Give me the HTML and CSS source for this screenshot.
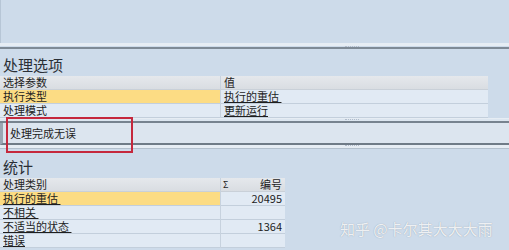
FILE: index.html
```html
<!DOCTYPE html>
<html lang="zh">
<head>
  <meta charset="UTF-8">
  <title>处理选项</title>
  <link rel="stylesheet" href="styles.css">
</head>
<body>
  <div class="screen">
    <!-- 顶部空白区域 -->
    <div class="top-pane"></div>
    <div class="splitter"><span class="grip"></span></div>

    <!-- 处理选项 -->
    <div class="section">
      <h2 class="title">处理选项</h2>
      <div class="grid grid-opts">
        <div class="row head">
          <div class="c1">选择参数</div>
          <div class="c2">值</div>
        </div>
        <div class="row">
          <div class="c1 sel">执行类型</div>
          <div class="c2"><a href="javascript:;">执行的重估 </a></div>
        </div>
        <div class="row">
          <div class="c1">处理模式</div>
          <div class="c2"><a href="javascript:;">更新运行</a></div>
        </div>
      </div>
    </div>
    <div class="splitter splitter-dark"><span class="grip"></span></div>

    <!-- 消息区域 -->
    <div class="msg-pane">
      <div class="msg">处理完成无误</div>
    </div>
    <div class="splitter splitter-low"><span class="grip"></span></div>

    <!-- 统计 -->
    <div class="section">
      <h2 class="title title-stat">统计</h2>
      <div class="grid grid-stat">
        <div class="row head">
          <div class="c1">处理类别</div>
          <div class="c2 num"><span class="sigma">Σ</span>编号</div>
        </div>
        <div class="row">
          <div class="c1 sel"><a href="javascript:;">执行的重估 </a></div>
          <div class="c2 num">20495</div>
        </div>
        <div class="row">
          <div class="c1"><a href="javascript:;">不相关 </a></div>
          <div class="c2 num"></div>
        </div>
        <div class="row">
          <div class="c1"><a href="javascript:;">不适当的状态 </a></div>
          <div class="c2 num">1364</div>
        </div>
        <div class="row">
          <div class="c1"><a href="javascript:;">错误</a></div>
          <div class="c2 num"></div>
        </div>
      </div>
    </div>

    <!-- 红框标注 -->
    <div class="mark"></div>
    <!-- 水印 -->
    <div class="watermark">知乎 @卡尔其大大大雨</div>
  </div>
</body>
</html>
```

FILE: styles.css
```css
* {
  margin: 0;
  padding: 0;
}

body {
  font-family: "Noto Sans CJK SC", "Liberation Sans", sans-serif;
  font-size: 11px;
  color: #1e1e1e;
  background-color: #cddbea;
}

.screen {
  position: relative;
  width: 509px;
  height: 250px;
  overflow: hidden;
  background-color: #cddbea;
}

/*顶部区域*/
.top-pane {
  height: 43px;
  border-left: 1px solid #b7c6d6;
}

/*分隔条*/
.splitter {
  height: 6px;
  border-top: 3px solid #e6edf4;
  border-bottom: 2px solid #7e8a96;
  box-sizing: border-box;
  display: flex;
  justify-content: center;
  padding-left: 195px;
}

.splitter-dark {
  height: 5px;
  border-top: 1px solid #e6edf4;
  border-bottom: 2px solid #77838f;
  background-color: #dce6f0;
}

.splitter-low {
  height: 4px;
  border-top: none;
  border-bottom: 1px solid #b3c0cd;
  background-color: #e6edf4;
}

.grip {
  width: 14px;
  height: 1px;
  border-top: 1px dotted #b1bccb;
}

/*区域标题*/
.section {
  padding-top: 6px;
}

.title {
  font-size: 15px;
  font-weight: normal;
  line-height: 20px;
  color: #2a2f36;
  padding-left: 3px;
  height: 21px;
}

.title-stat {
  padding-top: 2px;
  height: 21px;
}

/*表格*/
.grid .row {
  display: flex;
  height: 14px;
}

.grid .row > div {
  height: 14px;
  line-height: 13px;
  padding: 0 3px;
  white-space: nowrap;
  background-color: #e1eaf4;
  box-shadow: inset 0 -1px 0 #c3cfdc;
}

.grid .c1 {
  width: 214px;
  border-right: 1px solid #c7d2de;
}

.grid-opts .c2 {
  width: 261px;
}

.grid-stat .c2 {
  width: 58px;
}

.grid .head > div {
  background: linear-gradient(#e5e8ec, #d8dce1);
  box-shadow: inset 0 -1px 0 #c9d0d8;
}

.grid .row > .sel {
  background-color: #fcdc84;
}

.grid a {
  color: #1e1e1e;
  text-decoration: underline;
  white-space: pre;
}

.num {
  text-align: right;
  position: relative;
}

.sigma {
  position: absolute;
  left: 2px;
  top: 0;
  font-size: 9px;
}

/*消息区域*/
.msg-pane {
  height: 20px;
  background-color: #dce5ef;
  border-left: 3px solid #9aa6b3;
  border-bottom: 2px solid #6f7b87;
  padding-left: 7px;
  line-height: 20px;
}

/*红框*/
.mark {
  position: absolute;
  left: 6px;
  top: 117px;
  width: 123px;
  height: 32px;
  border: 2px solid #c5283d;
}

/*水印*/
.watermark {
  position: absolute;
  left: 340px;
  top: 218px;
  font-size: 15px;
  color: rgba(255, 255, 255, 0.85);
  text-shadow: 0 0 1px #8a98a8;
}
```
